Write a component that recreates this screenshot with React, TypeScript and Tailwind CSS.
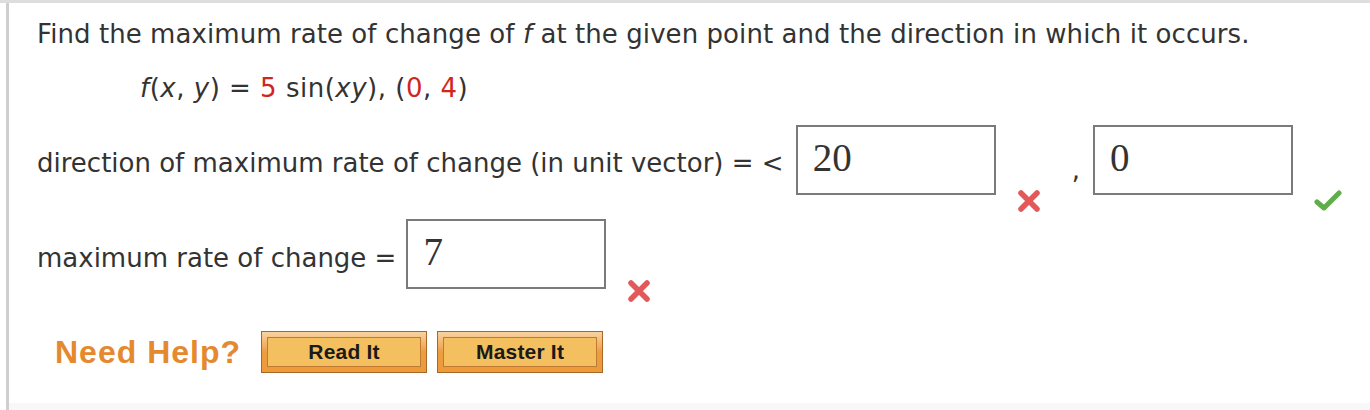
import React from "react";

const sans = { fontFamily: '"DejaVu Sans", Verdana, sans-serif' };

function CrossIcon() {
  return (
    <svg width="24" height="22" viewBox="0 0 24 22">
      <path d="M4 3 L20 19 M20 3 L4 19" stroke="#e04848" strokeWidth="5.5" strokeLinecap="round" opacity="0.9" />
    </svg>
  );
}

function CheckIcon() {
  return (
    <svg width="28" height="22" viewBox="0 0 28 22">
      <path d="M3 12 L10 18 L25 3" stroke="#5fae4a" strokeWidth="5" fill="none" strokeLinecap="round" strokeLinejoin="round" />
    </svg>
  );
}

function AnswerBox({ value }: { value: string }) {
  return (
    <div className="w-[200px] h-[70px] border-2 border-[#7a7a7a] bg-white px-[15px] pt-[8px] text-[39px] leading-[46px] text-[#333]" style={{ fontFamily: '"Liberation Serif", "Times New Roman", serif' }}>
      {value}
    </div>
  );
}

function HelpButton({ label }: { label: string }) {
  return (
    <div className="w-[166px] h-[42px] border border-[#a4682a] bg-gradient-to-b from-[#f7d3a0] via-[#ee9d3e] to-[#ec9a3a] p-[5px]">
      <div className="h-full border border-[#c07a33] bg-[#f4bf5e] flex items-center justify-center text-[21px] font-bold text-[#1a1a1a] tracking-[0.2px]" style={{ fontFamily: '"Liberation Sans", Arial, sans-serif' }}>
        {label}
      </div>
    </div>
  );
}

export default function App() {
  return (
    <div className="w-[1370px] h-[410px] bg-white border-t-[3px] border-[#dedede] overflow-hidden">
      <div className="ml-[6px] h-full flex flex-col border-l-[3px] border-[#cfcfcf] pl-[28px] pt-[16px] text-[#333] text-[26px]" style={sans}>
        <div className="leading-[30px] tracking-[0.07px]">
          Find the maximum rate of change of <i>f</i> at the given point and the direction in which it occurs.
        </div>

        <div className="mt-[24px] ml-[103px] leading-[30px] tracking-[0.5px]">
          <i>f</i>(<i>x</i>, <i>y</i>) = <span className="text-[#d0261d]">5</span> sin(<i>xy</i>), (<span className="text-[#d0261d]">0</span>, <span className="text-[#d0261d]">4</span>)
        </div>

        <div className="mt-[22px] flex items-center leading-[30px]">
          <span className="pt-[6px]">direction of maximum rate of change (in unit vector) = &lt;</span>
          <div className="ml-[12px]">
            <AnswerBox value="20" />
          </div>
          <div className="ml-[21px] self-end translate-y-[17px]">
            <CrossIcon />
          </div>
          <span className="ml-[31px] self-end mb-[10px]">,</span>
          <div className="ml-[13px]">
            <AnswerBox value="0" />
          </div>
          <div className="ml-[21px] self-end translate-y-[17px]">
            <CheckIcon />
          </div>
        </div>

        <div className="mt-[24px] flex items-center leading-[30px]">
          <span className="pt-[8px]">maximum rate of change =</span>
          <div className="ml-[10px]">
            <AnswerBox value="7" />
          </div>
          <div className="ml-[21px] self-end translate-y-[13px]">
            <CrossIcon />
          </div>
        </div>

        <div className="mt-[39px] flex items-center ml-[18px]">
          <span className="text-[32px] font-bold text-[#e5892f] mr-[20px] tracking-[1px]" style={{ fontFamily: '"Liberation Sans", Arial, sans-serif' }}>
            Need Help?
          </span>
          <HelpButton label="Read It" />
          <div className="ml-[10px]">
            <HelpButton label="Master It" />
          </div>
        </div>

        <div className="mt-auto -ml-[28px] h-[7px] bg-[#f8f8f8]" />
      </div>
    </div>
  );
}
